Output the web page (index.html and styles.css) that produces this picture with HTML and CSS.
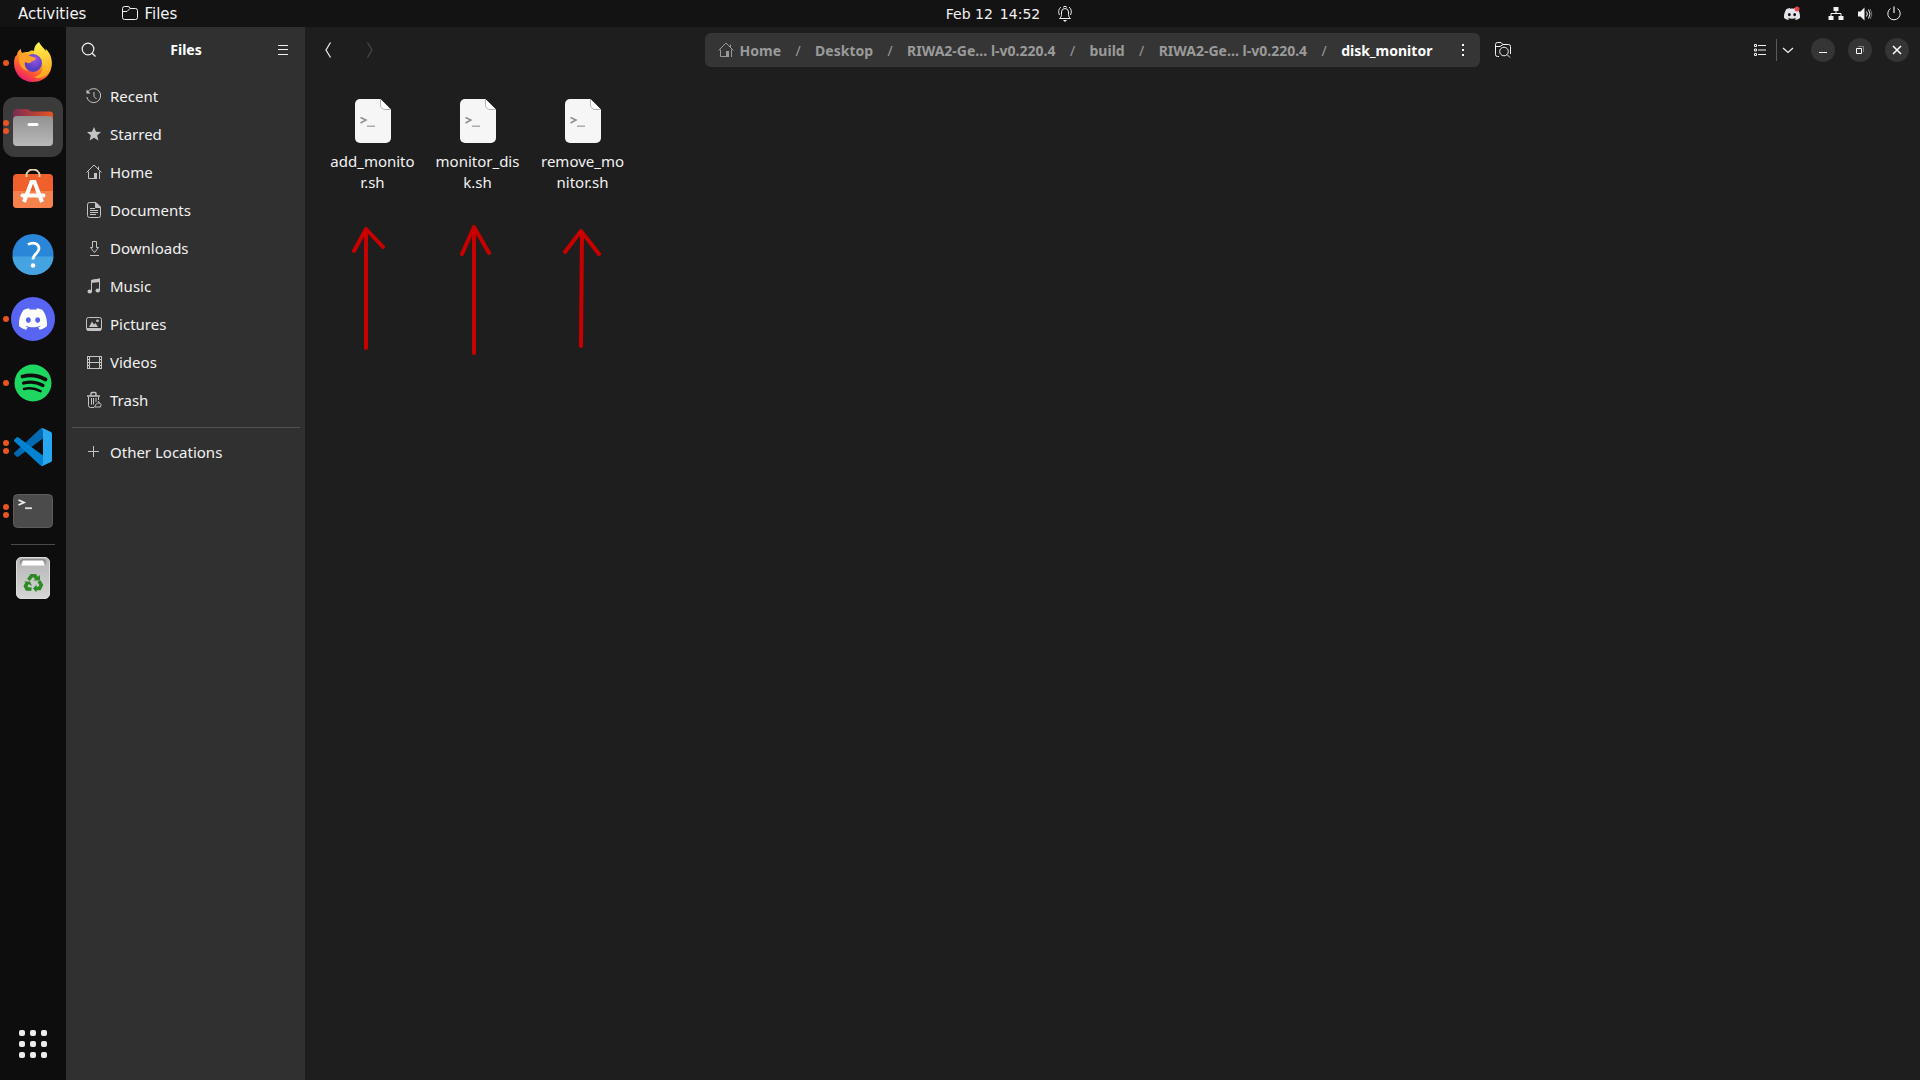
FILE: index.html
```html
<!DOCTYPE html>
<html lang="en">
<head>
  <meta charset="UTF-8">
  <title>Files</title>
  <meta name="viewport" content="width=device-width, initial-scale=1.0">
  <link rel="stylesheet" href="styles.css">
</head>
<body>
<svg class="defs" aria-hidden="true">
  <symbol id="i-discord" viewBox="0 0 24 24"><path d="M20.317 4.3698a19.7913 19.7913 0 00-4.8851-1.5152.0741.0741 0 00-.0785.0371c-.211.3753-.4447.8648-.6083 1.2495-1.8447-.2762-3.68-.2762-5.4868 0-.1636-.3933-.4058-.8742-.6177-1.2495a.077.077 0 00-.0785-.037 19.7363 19.7363 0 00-4.8852 1.515.0699.0699 0 00-.0321.0277C.5334 9.0458-.319 13.5799.0992 18.0578a.0824.0824 0 00.0312.0561c2.0528 1.5076 4.0413 2.4228 5.9929 3.0294a.0777.0777 0 00.0842-.0276c.4616-.6304.8731-1.2952 1.226-1.9942a.076.076 0 00-.0416-.1057c-.6528-.2476-1.2743-.5495-1.8722-.8923a.077.077 0 01-.0076-.1277c.1258-.0943.2517-.1923.3718-.2914a.0743.0743 0 01.0776-.0105c3.9278 1.7933 8.18 1.7933 12.0614 0a.0739.0739 0 01.0785.0095c.1202.099.246.1981.3728.2924a.077.077 0 01-.0066.1276 12.2986 12.2986 0 01-1.873.8914.0766.0766 0 00-.0407.1067c.3604.698.7719 1.3628 1.225 1.9932a.076.076 0 00.0842.0286c1.961-.6067 3.9495-1.5219 6.0023-3.0294a.077.077 0 00.0313-.0552c.5004-5.177-.8382-9.6739-3.5485-13.6604a.061.061 0 00-.0312-.0286zM8.02 15.3312c-1.1825 0-2.1569-1.0857-2.1569-2.419 0-1.3332.9555-2.4189 2.157-2.4189 1.2108 0 2.1757 1.0952 2.1568 2.419 0 1.3332-.9555 2.4189-2.1569 2.4189zm7.9748 0c-1.1825 0-2.1569-1.0857-2.1569-2.419 0-1.3332.9554-2.4189 2.1569-2.4189 1.2108 0 2.1757 1.0952 2.1568 2.419 0 1.3332-.946 2.4189-2.1568 2.4189Z"/></symbol>
  <symbol id="i-home" viewBox="0 0 16 16"><path d="M.5 8.5 8 1l7.500 7.500M12.500 5.500V2.500M2.500 7.500v7H8M13.500 7.500V15" fill="none" stroke="currentColor"/><path d="M8 9h3v6H8z" fill="currentColor"/></symbol>
  <symbol id="i-script" viewBox="0 0 36 44">
    <path d="M5 0h20l11 11v28a5 5 0 0 1-5 5H5a5 5 0 0 1-5-5V5a5 5 0 0 1 5-5z" fill="#f6f6f6"/>
    <path d="M25.500 0v6a4.500 4.500 0 0 0 4.500 4.500h6z" fill="#fff"/>
    <path d="M25.500 0v6a4.500 4.500 0 0 0 4.500 4.500h6" fill="none" stroke="#b4b4b4"/>
    <path d="M5.500 18.500l5.500 2.500-5.500 3" fill="none" stroke="#8f8f8f" stroke-width="1.500"/>
    <path d="M12 27.200h8" stroke="#a0a0a0" stroke-width="1.300"/>
  </symbol>
</svg>

<header class="topbar">
  <div class="top-left">
    <button class="top-btn">Activities</button>
    <button class="top-btn">
      <svg class="ico" viewBox="0 0 16 16" fill="none" stroke="currentColor"><path d="M.5 2.500a2 2 0 0 1 2-2h3.500a2 2 0 0 1 2 2h5.500a2 2 0 0 1 2 2v7a2 2 0 0 1-2 2h-11a2 2 0 0 1-2-2zM.500 5.500H5l3-3"/></svg>
      Files
    </button>
  </div>
  <button class="top-btn clock">Feb 12&ensp;14:52
    <svg class="ico bell" viewBox="0 0 16 16" fill="none" stroke="currentColor"><path d="M2.500 12.500h11c-1.200-1-2-2-2-4V6a3.500 3.500 0 0 0-7 0v2.500c0 2-.8 3-2 4zM2.500 9C1 6 1.500 3 4 1M13.500 9C15 6 14.500 3 12 1M6 1.500C7 0 9 0 10 1.500"/><path d="M6 14h4l-2 2z" fill="currentColor" stroke="none"/></svg>
  </button>
  <div class="status">
    <span class="tray">
      <svg class="ico discord-tray" viewBox="0 0 16 16"><use href="#i-discord"/><circle cx="13" cy="3" r="2.500" fill="#ed4245"/></svg>
    </span>
    <button class="top-btn" aria-label="System menu">
      <svg class="ico" viewBox="0 0 16 16"><path d="M5.500 1h5v4h-5zM.500 10h5v4h-5zM10.500 10h5v4h-5z" fill="currentColor"/><path d="M8 5v2.500M3 10V7.500h10V10" fill="none" stroke="currentColor"/></svg>
      <svg class="ico" viewBox="0 0 16 16"><path d="M1 5.500h2.500L7.500 1.500v13L3.500 10.500H1z" fill="currentColor"/><path d="M9.500 5.500q1.800 2.500 0 5M11.500 3.500q3 4.500 0 9" fill="none" stroke="currentColor"/><path d="M13.300 3q3 5 0 10" fill="none" stroke="#777"/></svg>
      <svg class="ico" viewBox="0 0 16 16" fill="none" stroke="currentColor"><path d="M8 .5V7" stroke-width="1.200"/><path d="M4.500 2.500a6.200 6.200 0 1 0 7 0"/></svg>
    </button>
  </div>
</header>

<div class="desktop">
  <nav class="dock" aria-label="Dock">
    <button class="app" aria-label="Firefox">
      <i class="dots"><b></b></i>
      <svg width="44" height="44" viewBox="0 0 44 44">
        <defs>
          <linearGradient id="fx" x1=".8" y1=".1" x2=".2" y2="1"><stop offset="0" stop-color="#ffe236"/><stop offset=".35" stop-color="#ff9d1e"/><stop offset=".65" stop-color="#ff5634"/><stop offset="1" stop-color="#e3107c"/></linearGradient>
          <linearGradient id="fy" x1=".5" y1="0" x2=".6" y2="1"><stop offset="0" stop-color="#fff44f"/><stop offset="1" stop-color="#ffa11c"/></linearGradient>
          <radialGradient id="fp" cx=".6" cy=".3"><stop offset="0" stop-color="#9f55e8"/><stop offset="1" stop-color="#5a3fc4"/></radialGradient>
        </defs>
        <path d="M10 8c0 2 0 3 1 4 2-1 4-1 6-1 2-1 4-2 6-1 4-1 14 2 17 9 3 11-5 22-18 22C11 41 3 33 3 22c0-4 1-7 3-8 0-3 2-5 4-6z" fill="url(#fx)"/>
        <path d="M28 1c2 4 5 6 7 9 0-1 0-2-1-3 7 6 9 16 4 24-4 6-10 7-15 5 9-2 10-9 7-14-4-5-8-8-7-12 0-4 2-7 5-9z" fill="url(#fy)"/>
        <circle cx="22" cy="22" r="9" fill="url(#fp)"/>
        <path d="M10 8c0 2 0 4 2 5 3-1 5 0 7 2 2 1 4 1 6 2-1 3-4 3-5 4-1 2-4 1-6 0-1 4 1 7 4 9-6-1-10-5-10-11 0-4 0-8 2-11z" fill="#ffa12a"/>
      </svg>
    </button>
    <button class="app active" aria-label="Files">
      <i class="dots"><b></b><b></b></i>
      <svg width="44" height="44" viewBox="0 0 44 44">
        <defs>
          <linearGradient id="fb"><stop offset="0" stop-color="#7a2a55"/><stop offset="1" stop-color="#e8541f"/></linearGradient>
          <linearGradient id="ff" x1="0" y1="0" x2="0" y2="1"><stop offset="0" stop-color="#929292"/><stop offset="1" stop-color="#b9b9b9"/></linearGradient>
        </defs>
        <path d="M2 16V8a4 4 0 0 1 4-4h10c2 0 3 2.500 5 2.500h18a3 3 0 0 1 3 3V18z" fill="url(#fb)"/>
        <rect x="2" y="11" width="40" height="30" rx="4" fill="url(#ff)"/>
        <rect x="16.500" y="18" width="11" height="3" rx="1.500" fill="#fff"/>
      </svg>
    </button>
    <button class="app" aria-label="Ubuntu Software">
      <svg width="44" height="44" viewBox="0 1 44 44">
        <rect x="2" y="6" width="40" height="34" rx="4" fill="#f0602c"/>
        <path d="M2 23h40v13a4 4 0 0 1-4 4H6a4 4 0 0 1-4-4z" fill="#f5824d"/>
        <path d="M15.500 9V7a6.500 5.500 0 0 1 13 0v2" fill="none" stroke="#f3d9b0" stroke-width="1.800"/>
        <path d="M13 34 20.500 14h3L31 34" fill="none" stroke="#fff" stroke-width="4"/>
        <path d="M11.500 27.500h21" stroke="#fff" stroke-width="4" stroke-linecap="round"/>
      </svg>
    </button>
    <button class="app" aria-label="Help">
      <svg width="44" height="44" viewBox="0 0 44 44">
        <circle cx="22" cy="21.500" r="20.500" fill="#2a86d8"/>
        <path d="M1.500 23.500a20.500 18.500 0 0 0 41 0z" fill="#46a3e2"/>
        <path d="M17 11.500c5-3 11-1 11 4 0 5-6 5-6 11" fill="none" stroke="#fff" stroke-width="2.800"/><circle cx="22" cy="32.500" r="2.300" fill="#fff"/>
      </svg>
    </button>
    <button class="app" aria-label="Discord">
      <i class="dots"><b></b></i>
      <svg width="44" height="44" viewBox="0 0 44 44"><circle cx="22" cy="22" r="22" fill="#5865f2"/><use href="#i-discord" x="8" y="8" width="28" height="28" fill="#fff"/></svg>
    </button>
    <button class="app" aria-label="Spotify">
      <i class="dots"><b></b></i>
      <svg width="44" height="44" viewBox="0 0 44 44" fill="none" stroke="#0d0d0d" stroke-linecap="round"><circle cx="22" cy="22" r="18.500" fill="#1ed760" stroke="none"/><path d="M11.500 15.500c8-2 16-1 23 3" stroke-width="3.800"/><path d="M12.500 22c7-1.800 13.500-1 19.500 2.500" stroke-width="3.200"/><path d="M13 28c6-1.500 11-.800 16.500 2.200" stroke-width="2.500"/></svg>
    </button>
    <button class="app" aria-label="Visual Studio Code">
      <i class="dots"><b></b><b></b></i>
      <svg width="38" height="38" viewBox="0 0 38 38">
        <path d="M26 1l3-1v10.500L4.500 28.500a1.500 1.500 0 0 1-2 0L.5 26.500a1.200 1.200 0 0 1 0-2z" fill="#0069b0"/>
        <path d="M26 37l3 1V27.500L4.500 9.500a1.500 1.500 0 0 0-2 0L.5 11.500a1.200 1.200 0 0 0 0 2z" fill="#0083d0"/>
        <path d="M26.500.600Q28 0 29 .3l8 3.700q1 .5 1 1.700v26.600q0 1.200-1 1.700l-8 3.700q-1 .3-2.500-.3 2.500 0 2.500-2.400V3q0-2.400-2.500-2.400z" fill="#27a7f0"/>
      </svg>
    </button>
    <button class="app" aria-label="Terminal">
      <i class="dots"><b></b><b></b></i>
      <svg width="44" height="44" viewBox="0 0 44 44"><rect x="2.500" y="5.500" width="39" height="33" rx="4" fill="#4b4b4b" stroke="#5d5d5d"/><path d="M7.500 11l5.500 2.500L7.500 16" fill="none" stroke="#eee" stroke-width="1.800"/><path d="M14 19.200h7" stroke="#ddd" stroke-width="1.800"/></svg>
    </button>
    <hr class="dock-line">
    <button class="app" aria-label="Trash">
      <svg width="44" height="44" viewBox="0 0 44 44">
        <defs><linearGradient id="tr" x1="0" y1="0" x2="0" y2="1"><stop offset="0" stop-color="#b4b4b4"/><stop offset="1" stop-color="#d6d6d6"/></linearGradient></defs>
        <rect x="5.500" y="1.500" width="33" height="41" rx="4.500" fill="url(#tr)" stroke="#dcdcdc"/>
        <path d="M9 9V6q0-3 3-3h20q3 0 3 3v3l-2-4H11z" fill="#8c8c8c"/>
        <path d="M10.500 9.500 12 4.500h20l1.500 5z" fill="#fff"/>
        <g fill="none" stroke="#2b8a22" stroke-width="3.600"><path d="M17.500 24l3-4.200h3.500l1.500 2.500"/><path d="M28 25l2.200 4-1.700 3.500H24"/><path d="M20.500 33H16l-1.500-3 2-3.500"/></g>
        <path d="M22.500 24.500h6.500V19zM25.500 28.500v8l-3.500-4zM13 25.500h6l2 4.500z" fill="#2b8a22"/>
      </svg>
    </button>
    <button class="app show-apps" aria-label="Show Applications">
      <svg width="28" height="28" viewBox="0 0 28 28" fill="#ececec"><rect width="6" height="6" rx="2"/><rect x="11" width="6" height="6" rx="2"/><rect x="22" width="6" height="6" rx="2"/><rect y="11" width="6" height="6" rx="2"/><rect x="11" y="11" width="6" height="6" rx="2"/><rect x="22" y="11" width="6" height="6" rx="2"/><rect y="22" width="6" height="6" rx="2"/><rect x="11" y="22" width="6" height="6" rx="2"/><rect x="22" y="22" width="6" height="6" rx="2"/></svg>
    </button>
  </nav>

  <aside class="sidebar">
    <div class="side-head">
      <button class="icon-btn" aria-label="Search"><svg class="ico" viewBox="0 0 16 16" fill="none" stroke="currentColor"><circle cx="7" cy="7" r="5.800" stroke-width="1.200"/><path d="M11.200 11.200 14.500 14.500" stroke-width="1.300"/></svg></button>
      <h1>Files</h1>
      <button class="icon-btn" aria-label="Main menu"><svg class="ico" viewBox="0 0 16 16" stroke="currentColor"><path d="M3 3.500h10M3 7.500h10M3 12.500h10"/></svg></button>
    </div>
    <nav class="places">
      <a href="#"><svg class="ico" viewBox="0 0 16 16" fill="none" stroke="currentColor"><path d="M2 3.500A7 7 0 1 1 .8 9M8 4v4.500l2.500 2.500"/><path d="M.500 1.500v4h4z" fill="currentColor" stroke="none"/></svg>Recent</a>
      <a href="#"><svg class="ico" viewBox="0 0 16 16" fill="currentColor"><path d="M8 1l2 4.700 5 .4-3.800 3.300 1.200 5L8 11.700l-4.400 2.700 1.200-5L1 6.100l5-.4z"/></svg>Starred</a>
      <a href="#"><svg class="ico"><use href="#i-home"/></svg>Home</a>
      <a href="#"><svg class="ico" viewBox="0 0 16 16" fill="none" stroke="currentColor"><path d="M3.500.5H10L14.500 5v8.500a2 2 0 0 1-2 2h-9a2 2 0 0 1-2-2v-11a2 2 0 0 1 2-2zM4 6.500h5M4 8.500h8M4 10.500h8M4 12.500h6"/><path d="M9.500.5v5h5z" fill="currentColor"/></svg>Documents</a>
      <a href="#"><svg class="ico" viewBox="0 0 16 16" fill="none" stroke="currentColor"><path d="M6.500 1.500h4v6h2L8.500 12.500l-4-5h2zM4 15.500h9"/></svg>Downloads</a>
      <a href="#"><svg class="ico" viewBox="0 0 16 16"><path d="M5.500 13V2.500l8-1.500v11" fill="none" stroke="currentColor"/><path d="M5 2l9-1.500V4L5 5z" fill="currentColor"/><ellipse cx="3.800" cy="13.500" rx="2.300" ry="2" fill="currentColor"/><ellipse cx="11.800" cy="12.500" rx="2.300" ry="2" fill="currentColor"/></svg>Music</a>
      <a href="#"><svg class="ico" viewBox="0 0 16 16"><rect x=".5" y="1.500" width="15" height="13" rx="2" fill="none" stroke="currentColor"/><path d="M1 12h14v2.500H1zM3 11l3-5.500 2 3 1.500-1.500L12 11z" fill="currentColor"/><circle cx="11.500" cy="4.800" r="1.400" fill="currentColor"/></svg>Pictures</a>
      <a href="#"><svg class="ico" viewBox="0 0 16 16" fill="none" stroke="currentColor"><path d="M3.500 2v13M13.500 2v13M3.500 2.500h10M3.500 8.500h10M3.500 14.500h10"/><path d="M1.500 2v13M15.500 2v13" stroke-width="1"/><path d="M2.500 2v13M14.500 2v13" stroke-dasharray="1 2"/></svg>Videos</a>
      <a href="#"><svg class="ico" viewBox="0 0 16 16" fill="none" stroke="currentColor"><path d="M1 4h13M5 3.500v-2a1 1 0 0 1 1-1h3a1 1 0 0 1 1 1v2" stroke-width="1.400"/><path d="M2.500 5v8.500a2 2 0 0 0 2 2H8M5.500 6v6.500M7.500 6v6.500M10 6v4M12.500 5v3"/><path d="M12 9l2 2.500M10 12.500l-1.500 2.500H14.500l.5-2.500-1.500-1.500h-2l-1.500 1.500"/></svg>Trash</a>
      <hr>
      <a href="#"><svg class="ico" viewBox="0 0 16 16" fill="none" stroke="currentColor"><path d="M7.500 2v11M2 7.500h11"/></svg>Other Locations</a>
    </nav>
  </aside>

  <main class="window">
    <div class="headerbar">
      <div class="nav-btns">
        <button class="icon-btn" aria-label="Back"><svg class="ico" viewBox="0 0 16 16" fill="none" stroke="currentColor"><path d="M10.500.500 6 8l4.500 7.500" stroke-width="1.200"/></svg></button>
        <button class="icon-btn" aria-label="Forward" disabled><svg class="ico" viewBox="0 0 16 16" fill="none" stroke="currentColor"><path d="M5.500.500 10 8l-4.500 7.500" stroke-width="1.200"/></svg></button>
      </div>
      <div class="location">
        <nav class="pathbar" aria-label="Path">
          <a href="#"><svg class="ico"><use href="#i-home"/></svg>Home</a><span>/</span>
          <a href="#">Desktop</a><span>/</span>
          <a href="#">RIWA2-Ge… l-v0.220.4</a><span>/</span>
          <a href="#">build</a><span>/</span>
          <a href="#">RIWA2-Ge… l-v0.220.4</a><span>/</span>
          <a href="#" class="current">disk_monitor</a>
          <button class="icon-btn" aria-label="Folder menu"><svg class="ico" viewBox="0 0 16 16" fill="currentColor"><path d="M7 2h2v2H7zM7 7h2v2H7zM7 12h2v2H7z"/></svg></button>
        </nav>
        <button class="icon-btn" aria-label="Search this folder"><svg class="ico" viewBox="0 0 16 16" fill="none" stroke="currentColor"><path d="M4 14.500H2.500a2 2 0 0 1-2-2v-10a2 2 0 0 1 2-2h3.500l2 2h5.500a2 2 0 0 1 2 2V12M.500 4.500H5l3-2"/><circle cx="9" cy="9.500" r="4.300"/><path d="M12 12.500 15 15.500"/></svg></button>
      </div>
      <div class="controls">
        <button class="icon-btn view" aria-label="List view"><svg class="ico" viewBox="0 0 16 16" fill="none" stroke="currentColor"><path d="M2.500 2.500h2v2h-2zM2.500 7h2v2h-2zM2.500 11.500h2v2h-2zM6 3.500h8M6 8h8M6 12.500h8"/></svg></button>
        <button class="icon-btn view-menu" aria-label="View options"><svg class="ico" viewBox="0 0 16 16" fill="none" stroke="currentColor"><path d="M3 6l5 4.500L13 6" stroke-width="1.200"/></svg></button>
        <button class="round" aria-label="Minimize"><svg class="ico" viewBox="0 0 16 16" stroke="currentColor"><path d="M4 10.500h8"/></svg></button>
        <button class="round" aria-label="Restore"><svg class="ico" viewBox="0 0 16 16" fill="none" stroke="currentColor"><path d="M4.500 6.500h5v5h-5z"/><path d="M6 4.500h5.500V10" stroke="#808080"/></svg></button>
        <button class="round" aria-label="Close"><svg class="ico" viewBox="0 0 16 16" stroke="currentColor"><path d="M4 4l8 8M12 4l-8 8" stroke-width="1.500"/></svg></button>
      </div>
    </div>

    <div class="files">
      <button class="file"><svg width="36" height="44"><use href="#i-script"/></svg>add_monitor.sh</button>
      <button class="file"><svg width="36" height="44"><use href="#i-script"/></svg>monitor_disk.sh</button>
      <button class="file"><svg width="36" height="44"><use href="#i-script"/></svg>remove_monitor.sh</button>
      <!-- hand-drawn arrows on top of the file grid -->
      <svg class="arrows" width="260" height="140" viewBox="345 220 260 140">
        <path d="M366 348V229M354 251l12-22 17 18"/>
        <path d="M474 353V227M462 254l12-27 15 26"/>
        <path d="M581 346l1-114M565 252l16-21 18 23"/>
      </svg>
    </div>
  </main>
</div>
</body>
</html>
```

FILE: styles.css
```css
* { box-sizing: border-box; }
body { margin: 0; height: 100vh; display: flex; flex-direction: column; overflow: hidden; background: #1e1e1e; color: #f2f2f2; font-family: "Noto Sans", sans-serif; font-size: 15px; }
button { margin: 0; padding: 0; border: none; background: none; color: inherit; font: inherit; cursor: pointer; }
a { color: inherit; text-decoration: none; }
hr { margin: 0; border: none; }
svg { display: block; flex: none; }
.defs { position: absolute; width: 0; height: 0; }
.ico { width: 16px; height: 16px; overflow: visible; }

/* top panel */
.topbar { flex: none; display: grid; grid-template-columns: 1fr auto 1fr; height: 27px; padding: 0 18px; background: #131313; font-family: "DejaVu Sans", sans-serif; }
.top-btn { display: flex; align-items: center; gap: 6px; height: 27px; }
.top-left { display: flex; gap: 36px; }
.clock { position: relative; margin-left: 66px; font-size: 14px; }
.bell { position: absolute; left: 100%; margin-left: 17px; }
.status { display: flex; justify-content: flex-end; gap: 28px; }
.status .top-btn { gap: 13px; }
.tray { display: flex; align-items: center; height: 27px; }
.discord-tray { fill: #e4e4ea; }

.desktop { flex: 1; display: flex; min-height: 0; }

/* dock */
.dock { flex: none; width: 66px; display: flex; flex-direction: column; align-items: center; gap: 4px; padding: 6px 3px; background: #0d0d0d; }
.app { position: relative; display: flex; align-items: center; justify-content: center; width: 60px; height: 60px; border-radius: 12px; }
.app.active { background: #3b3b3b; }
.dots { position: absolute; left: 0; top: 0; bottom: 0; display: flex; flex-direction: column; justify-content: center; gap: 2px; }
.dots b { width: 6px; height: 6px; border-radius: 50%; background: #e95420; }
.dock-line { width: 44px; height: 1px; margin: -1px 0; background: #4a4a4a; }
.show-apps { margin-top: auto; }

/* sidebar */
.sidebar { flex: none; width: 239px; background: #303030; }
.side-head { display: flex; align-items: center; justify-content: space-between; height: 46px; padding: 0 5px 0 6px; }
.side-head h1 { margin: 0; padding-bottom: 1px; font-size: 14px; font-weight: bold; color: #fff; }
.icon-btn { display: flex; align-items: center; justify-content: center; width: 34px; height: 34px; border-radius: 6px; }
.places { display: flex; flex-direction: column; padding: 4px 5px 4px 6px; }
.places a { display: flex; align-items: center; gap: 8px; height: 38px; padding: 0 14px; }
.places .ico { color: #c4c4c4; }
.places hr { height: 1px; margin: 8px 0 5px; background: #505050; }

/* window */
.window { flex: 1; min-width: 0; }
.headerbar { display: grid; grid-template-columns: 1fr auto 1fr; align-items: center; height: 46px; padding: 0 6px; }
.nav-btns { display: flex; gap: 8px; }
.icon-btn:disabled { color: #4a4a4a; }
.location { display: flex; gap: 6px; }
.pathbar { display: flex; align-items: center; height: 34px; padding-left: 13px; border-radius: 6px; background: #353535; color: #9a9a9a; font-size: 14px; font-weight: bold; }
.pathbar a { display: flex; align-items: center; gap: 6px; }
.pathbar span { width: 34px; text-align: center; font-weight: normal; }
.pathbar .current { margin-right: 14px; color: #fff; }
.pathbar .icon-btn { color: #fff; }
.controls { display: flex; align-items: center; justify-content: flex-end; gap: 13px; padding-right: 5px; }
.view { width: 33px; margin-right: -13px; border-right: 1px solid #5a5a5a; border-radius: 0; height: 22px; }
.view-menu { width: 22px; margin-right: -1px; }
.round { display: flex; align-items: center; justify-content: center; width: 24px; height: 24px; border-radius: 50%; background: #353535; color: #fff; }

/* files */
.files { position: relative; display: flex; gap: 20px; padding: 26px 25px; }
.file { display: flex; flex-direction: column; align-items: center; gap: 8px; width: 85px; line-height: 21px; word-break: break-all; text-align: center; }
.arrows { position: absolute; left: 40px; top: 147px; fill: none; stroke: #c80000; stroke-width: 4; stroke-linecap: round; stroke-linejoin: round; }
```
